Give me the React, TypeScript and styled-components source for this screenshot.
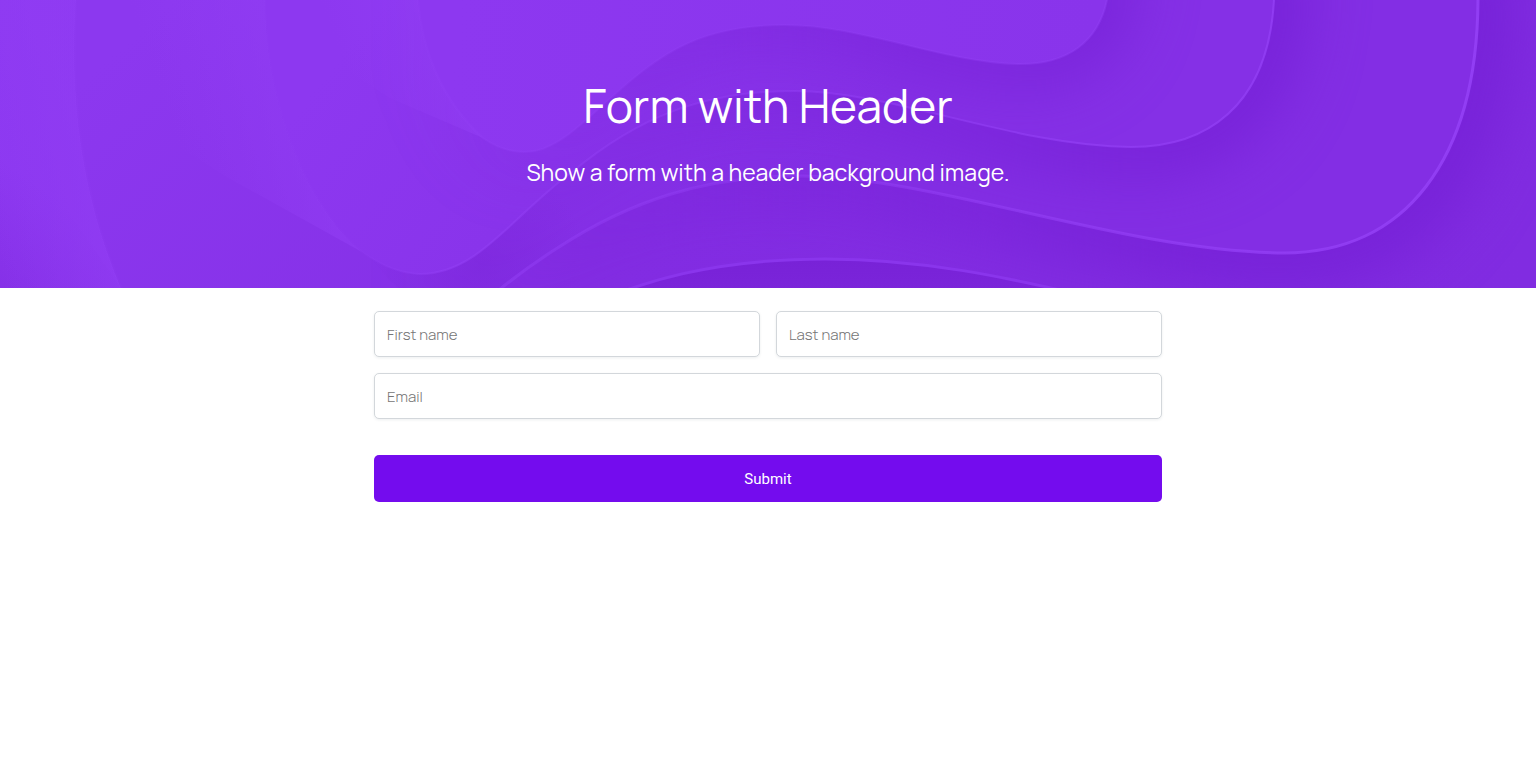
import React from 'react';
import styled, { createGlobalStyle } from 'styled-components';

const GlobalStyle = createGlobalStyle`
  *, *::before, *::after { box-sizing: border-box; }
  body {
    margin: 0;
    background: #fff;
    font-family: Manrope, Inter, 'Liberation Sans', sans-serif;
  }
`;

const Header = styled.header`
  display: grid;
  min-height: 288px;
  background: #852fe5;
  color: #fff;
  text-align: center;
  position: relative;
  overflow: hidden;
`;

const Backdrop = styled.svg`
  position: absolute;
  inset: 0;
  width: 100%;
  height: 100%;
`;

const HeaderText = styled.div`
  position: relative;
  padding: 72px 24px 0;
`;

const Title = styled.h1`
  margin: 0;
  font-size: 46px;
  line-height: 68px;
  font-weight: 400;
`;

const Subtitle = styled.p`
  margin: 16px 0 0;
  font-size: 23px;
  line-height: 32px;
  font-weight: 400;
`;

const Form = styled.form`
  display: grid;
  grid-template-columns: 1fr 1fr;
  gap: 16px;
  width: 100%;
  max-width: 836px;
  margin: 0 auto;
  padding: 23px 24px;
`;

const Field = styled.input<{ $wide?: boolean }>`
  grid-column: ${({ $wide }) => ($wide ? '1 / -1' : 'auto')};
  width: 100%;
  min-width: 0;
  height: 46px;
  padding: 0 12px;
  border: 1px solid #d3d7db;
  border-radius: 5px;
  background: #fff;
  box-shadow: 0 1px 3px rgba(20, 50, 60, 0.08);
  color: #222;
  font-family: inherit;
  font-size: 15px;
  font-weight: 300;
  &::placeholder { color: #757575; opacity: 1; }
`;

const Submit = styled.button`
  grid-column: 1 / -1;
  height: 47px;
  margin-top: 20px;
  border: 0;
  border-radius: 5px;
  background: #740cee;
  color: #fff;
  font-family: Roboto, 'Open Sans', sans-serif;
  font-size: 15px;
  cursor: pointer;
`;

const inner =
  'M417 -10 L418 0 C422 50 441 100 483 138 C497 148 511 152 525 152 C572 152 610 84 678 48 C708 32 744 25 785 25 C862 25 945 63 1020 64 C1068 64 1098 42 1107 0 L1109 -10 Z';
const middle =
  'M265 -10 L265 0 C266 65 279 115 299 163 C316 201 338 232 362 252 C385 268 402 273 420 274 C478 274 512 216 572 172 C636 119 700 91 795 91 C892 91 1015 146 1131 147 C1205 147 1268 108 1274 0 L1274 -10 Z';
const outer =
  'M76 -10 L76 0 C70 95 80 190 121 288 L140 320 L465 320 C490 296 524 269 559 247 C630 201 705 176 799 176 C935 176 1125 252 1284 253 C1405 253 1477 160 1478 0 L1478 -10 Z';
const lower = 'M590 304 C640 283 710 259 825 259 C920 259 1000 275 1120 304 Z';

const Waves = () => (
  <Backdrop viewBox="0 0 1536 288" preserveAspectRatio="xMidYMid slice" aria-hidden="true">
    <defs>
      <linearGradient id="base" gradientUnits="userSpaceOnUse" x1="0" y1="0" x2="1536" y2="288">
        <stop offset="0" stopColor="#8d39f1" />
        <stop offset="0.4" stopColor="#832de3" />
        <stop offset="1" stopColor="#812ce1" />
      </linearGradient>
      <linearGradient id="outerFill" gradientUnits="userSpaceOnUse" x1="240" y1="-60" x2="620" y2="360">
        <stop offset="0" stopColor="#8c38ef" />
        <stop offset="1" stopColor="#832ee4" />
      </linearGradient>
      <linearGradient id="middleFill" gradientUnits="userSpaceOnUse" x1="400" y1="-20" x2="760" y2="260">
        <stop offset="0" stopColor="#8d38f0" />
        <stop offset="1" stopColor="#8530e6" />
      </linearGradient>
      <linearGradient id="innerFill" gradientUnits="userSpaceOnUse" x1="460" y1="0" x2="1090" y2="60">
        <stop offset="0" stopColor="#8d38f0" />
        <stop offset="1" stopColor="#8934eb" />
      </linearGradient>
      <linearGradient id="shade" gradientUnits="userSpaceOnUse" x1="400" y1="0" x2="1200" y2="0">
        <stop offset="0" stopColor="#7822d8" stopOpacity="0" />
        <stop offset="0.4" stopColor="#7822d8" stopOpacity="0.35" />
        <stop offset="1" stopColor="#7520d6" stopOpacity="0.8" />
      </linearGradient>
      <linearGradient id="edge" gradientUnits="userSpaceOnUse" x1="360" y1="0" x2="1480" y2="0">
        <stop offset="0" stopColor="#9440f6" stopOpacity="0.1" />
        <stop offset="0.08" stopColor="#9440f6" stopOpacity="0.5" />
        <stop offset="0.35" stopColor="#9440f6" stopOpacity="0.4" />
        <stop offset="0.6" stopColor="#9440f6" stopOpacity="0.6" />
        <stop offset="1" stopColor="#9440f6" stopOpacity="0.9" />
      </linearGradient>
      <linearGradient id="glowOuter" gradientUnits="userSpaceOnUse" x1="-10" y1="230" x2="95" y2="200">
        <stop offset="0" stopColor="#923ef4" stopOpacity="0" />
        <stop offset="1" stopColor="#923ef4" stopOpacity="0.55" />
      </linearGradient>
      <linearGradient id="glowMiddle" gradientUnits="userSpaceOnUse" x1="180" y1="150" x2="295" y2="110">
        <stop offset="0" stopColor="#923ef4" stopOpacity="0" />
        <stop offset="1" stopColor="#923ef4" stopOpacity="0.55" />
      </linearGradient>
      <linearGradient id="glowInner" gradientUnits="userSpaceOnUse" x1="350" y1="80" x2="440" y2="45">
        <stop offset="0" stopColor="#923ef4" stopOpacity="0" />
        <stop offset="1" stopColor="#923ef4" stopOpacity="0.55" />
      </linearGradient>
      <linearGradient id="corner" gradientUnits="userSpaceOnUse" x1="0" y1="288" x2="60" y2="200">
        <stop offset="0" stopColor="#822ce2" stopOpacity="0.6" />
        <stop offset="1" stopColor="#822ce2" stopOpacity="0" />
      </linearGradient>
      <radialGradient id="hollow" gradientUnits="userSpaceOnUse" cx="480" cy="268" r="110">
        <stop offset="0" stopColor="#7822d6" stopOpacity="0.4" />
        <stop offset="1" stopColor="#7822d6" stopOpacity="0" />
      </radialGradient>
      <linearGradient id="lowerFill" gradientUnits="userSpaceOnUse" x1="0" y1="259" x2="0" y2="304">
        <stop offset="0" stopColor="#7822d7" />
        <stop offset="1" stopColor="#7c26db" />
      </linearGradient>
      <filter
        id="soft"
        filterUnits="userSpaceOnUse"
        x="-100"
        y="-150"
        width="1736"
        height="588"
        colorInterpolationFilters="sRGB"
      >
        <feGaussianBlur stdDeviation="28" />
      </filter>
      <clipPath id="outerClip"><path d={outer} /></clipPath>
      <clipPath id="middleClip"><path d={middle} /></clipPath>
    </defs>

    <rect width="1536" height="288" fill="url(#base)" />
    <path d="M0 150 L0 288 L121 288 L60 200 Z" fill="url(#corner)" />
    <path d="M0 0 H76 C70 95 80 190 121 288 H0 Z" fill="url(#glowOuter)" />
    <path d={outer} fill="none" stroke="url(#shade)" strokeWidth="76" filter="url(#soft)" />

    <path d={outer} fill="url(#outerFill)" />
    <g clipPath="url(#outerClip)">
      <path d={middle} fill="none" stroke="url(#shade)" strokeWidth="66" filter="url(#soft)" />
      <path
        d="M265 0 C266 65 279 115 299 163 C316 201 338 232 362 252 L225 176 L160 135 L110 0 Z"
        fill="url(#glowMiddle)"
      />
      <path d="M362 252 L398 288 H620 V150 H400 Z" fill="url(#hollow)" />
    </g>
    <path d={outer} fill="none" stroke="url(#edge)" strokeWidth="3" />

    <path d={middle} fill="url(#middleFill)" />
    <g clipPath="url(#middleClip)">
      <path d={inner} fill="none" stroke="url(#shade)" strokeWidth="56" filter="url(#soft)" />
      <path d="M418 0 C422 50 441 100 483 138 L390 98 L330 60 L300 0 Z" fill="url(#glowInner)" />
    </g>
    <path d={middle} fill="none" stroke="url(#edge)" strokeWidth="2" />

    <path d={inner} fill="url(#innerFill)" />
    <path d={inner} fill="none" stroke="url(#edge)" strokeWidth="2" opacity="0.6" />

    <path d={lower} fill="url(#lowerFill)" />
    <path d={lower} fill="none" stroke="#8a35ec" strokeWidth="3" />
  </Backdrop>
);

export default function App() {
  return (
    <>
      <GlobalStyle />
      <Header>
        <Waves />
        <HeaderText>
          <Title>Form with Header</Title>
          <Subtitle>Show a form with a header background image.</Subtitle>
        </HeaderText>
      </Header>
      <main>
        <Form onSubmit={(event: React.FormEvent) => event.preventDefault()}>
          <Field type="text" placeholder="First name" aria-label="First name" />
          <Field type="text" placeholder="Last name" aria-label="Last name" />
          <Field $wide type="email" placeholder="Email" aria-label="Email" />
          <Submit type="submit">Submit</Submit>
        </Form>
      </main>
    </>
  );
}
